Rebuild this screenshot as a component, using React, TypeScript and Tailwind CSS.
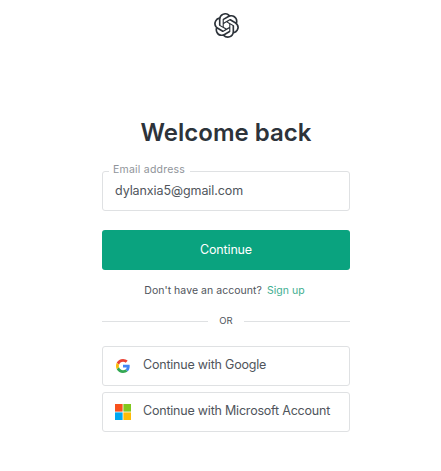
import React, { useState } from 'react';
import { SiOpenai } from 'react-icons/si';

const GoogleIcon = () => (
  <svg viewBox="0 0 48 48" className="mb-px h-[14px] w-[14px]">
    <path fill="#EA4335" d="M24 9.5c3.54 0 6.71 1.22 9.21 3.6l6.85-6.85C35.9 2.38 30.47 0 24 0 14.62 0 6.51 5.38 2.56 13.22l7.98 6.19C12.43 13.72 17.74 9.5 24 9.5z" />
    <path fill="#4285F4" d="M46.98 24.55c0-1.57-.15-3.09-.38-4.55H24v9.02h12.94c-.58 2.96-2.26 5.48-4.78 7.18l7.73 6c4.51-4.18 7.09-10.36 7.09-17.65z" />
    <path fill="#FBBC05" d="M10.53 28.59c-.48-1.45-.76-2.99-.76-4.59s.27-3.14.76-4.59l-7.98-6.19C.92 16.46 0 20.12 0 24c0 3.88.92 7.54 2.56 10.78l7.97-6.19z" />
    <path fill="#34A853" d="M24 48c6.48 0 11.93-2.13 15.89-5.81l-7.73-6c-2.15 1.45-4.92 2.3-8.16 2.3-6.26 0-11.57-4.22-13.47-9.91l-7.98 6.19C6.51 42.62 14.62 48 24 48z" />
  </svg>
);

const MicrosoftIcon = () => (
  <svg viewBox="0 0 21 21" className="h-4 w-4">
    <path fill="#f8511d" d="M0 0h10v10H0z" />
    <path fill="#81c71e" d="M11 0h10v10H11z" />
    <path fill="#00a8f1" d="M0 11h10v10H0z" />
    <path fill="#fdbb07" d="M11 11h10v10H11z" />
  </svg>
);

const PROVIDERS = [
  { name: 'Google', label: 'Continue with Google', icon: <GoogleIcon /> },
  { name: 'Microsoft', label: 'Continue with Microsoft Account', icon: <MicrosoftIcon /> },
];

export default function App() {
  const [email, setEmail] = useState('dylanxia5@gmail.com');

  return (
    <div className="min-h-[471px] bg-white pl-[102px] font-['Inter','Liberation_Sans',sans-serif] text-[#2d333a]">
      <div className="flex w-[248px] flex-col">
        {/* Logo */}
        <div className="flex h-[38px] justify-center pt-[13px]">
          <SiOpenai className="h-[25px] w-[25px] text-[#2d333a]" />
        </div>

        <h1 className="mt-[79px] text-center text-2xl leading-8 font-semibold whitespace-nowrap">Welcome back</h1>

        {/* Email */}
        <div className="relative mt-[22px]">
          <input
            value={email}
            onChange={(e) => setEmail(e.target.value)}
            className="block h-10 w-full rounded-[3px] border border-[#dfe1e3] px-3 pb-0.5 text-[12.5px] tracking-[-0.08px] text-[#50555c] outline-none"
          />
          <label className="absolute -top-2 left-[7px] bg-white pr-[5px] pl-1 text-[10.5px] leading-[14px] tracking-[0.22px] whitespace-nowrap text-[#8f949a]">
            Email address
          </label>
        </div>

        <button className="mt-[19px] h-10 rounded-[3px] bg-[#0aa37f] text-[12.5px] tracking-[-0.15px] text-white">Continue</button>

        <p className="mt-[13px] pr-[3px] text-center text-[10.5px] leading-4 tracking-[0.04px] whitespace-nowrap text-[#50555c]">
          Don't have an account? <a className="ml-0.5 text-[#3fae91]">Sign up</a>
        </p>

        {/* Divider */}
        <div className="mt-3.5 flex h-4 items-center text-[9.5px] text-[#50555c]">
          <div className="h-px flex-1 bg-[#dfe1e3]" />
          <span className="w-9 pt-px text-center">OR</span>
          <div className="h-px flex-1 bg-[#dfe1e3]" />
        </div>

        <div className="mt-[17px] flex flex-col gap-1.5">
          {PROVIDERS.map(provider => (
            <button
              key={provider.name}
              className="flex h-10 items-center rounded-[3px] border border-[#dfe1e3] pl-3 text-[12.5px] tracking-[-0.21px] whitespace-nowrap text-[#50555c]"
            >
              <span className="mr-3 flex w-4 justify-center">{provider.icon}</span>
              <span className="pb-px">{provider.label}</span>
            </button>
          ))}
        </div>
      </div>
    </div>
  );
}
